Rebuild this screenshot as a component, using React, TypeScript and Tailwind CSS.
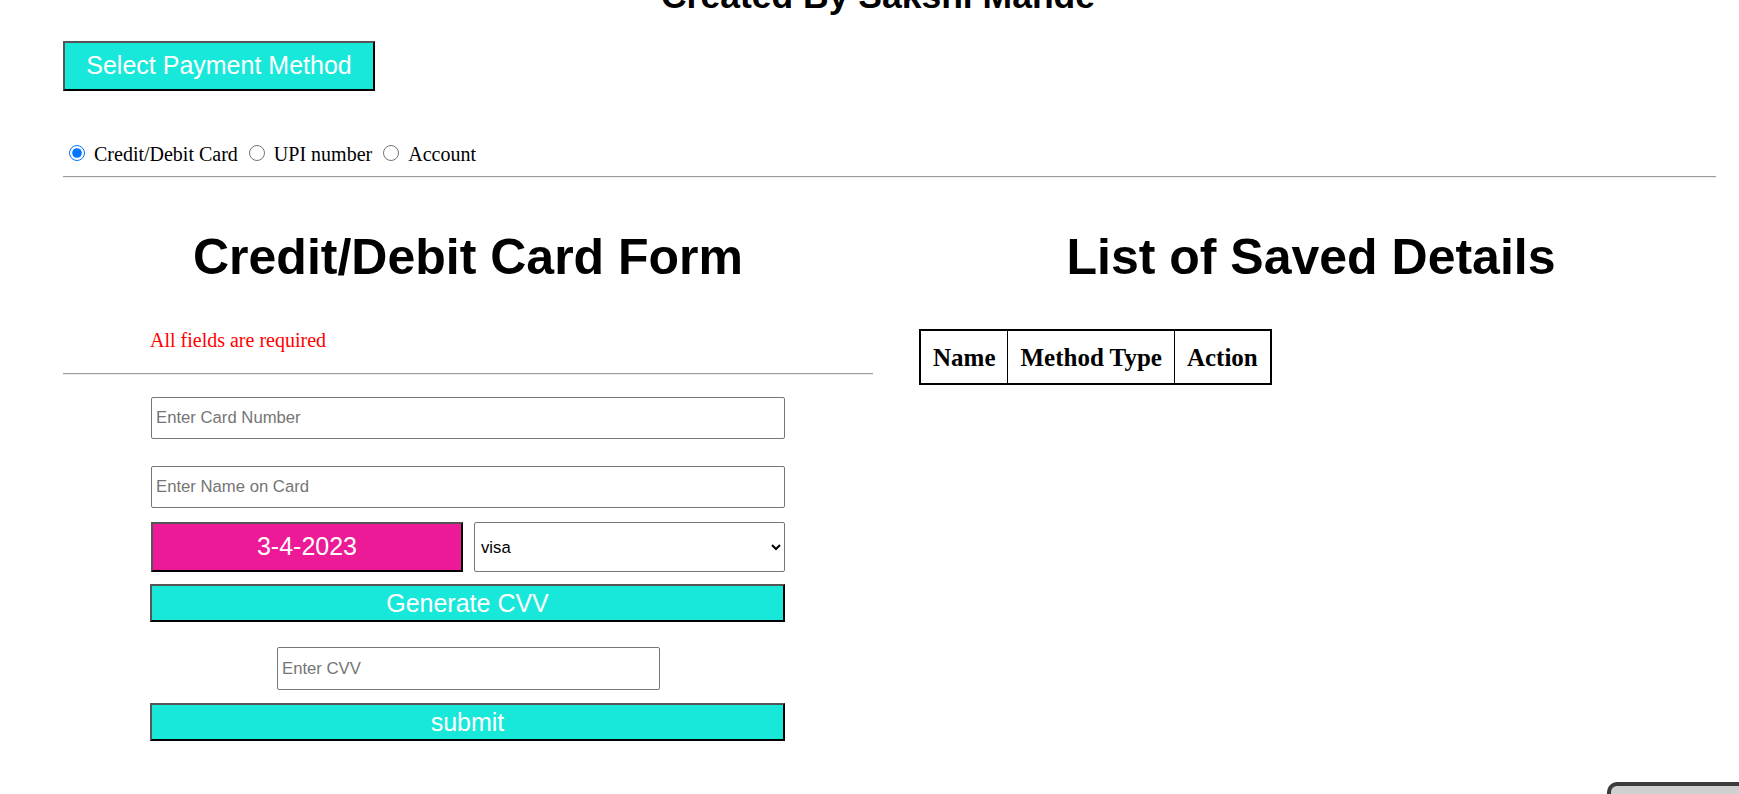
import { useState } from "react";

export default function App() {
  const [method, setMethod] = useState("card");

  return (
    <div className="relative h-[794px] overflow-hidden bg-white pl-[63px] pr-[23px] font-['Liberation_Serif',serif] text-[20px] text-black">
      {/* page title, scrolled partly out of view */}
      <h2 className="-mt-[24px] pr-[23px] text-center font-['Liberation_Sans',Arial,sans-serif] text-[35.5px] font-bold leading-[41px]">
        Created By Sakshi Mahde
      </h2>

      <button className="mt-[24px] h-[50px] w-[312px] border-2 border-black border-t-[#555] border-l-[#555] bg-[#18e8da] font-['Liberation_Sans',Arial,sans-serif] text-[25px] text-white">
        Select Payment Method
      </button>

      <div className="mt-[52px] flex h-[23px] items-center leading-[23px]">
        <input
          type="radio"
          name="method"
          checked={method === "card"}
          onChange={() => setMethod("card")}
          className="mb-[3px] ml-[6px] mr-[4px] h-4 w-4 accent-[#0075ff]"
        />
        <span className="ml-[5px]">Credit/Debit Card</span>
        <input
          type="radio"
          name="method"
          checked={method === "upi"}
          onChange={() => setMethod("upi")}
          className="mb-[3px] ml-[11px] mr-[4px] h-4 w-4"
        />
        <span className="ml-[5px]">UPI number</span>
        <input
          type="radio"
          name="method"
          checked={method === "account"}
          onChange={() => setMethod("account")}
          className="mb-[3px] ml-[11px] mr-[4px] h-4 w-4"
        />
        <span className="ml-[5px]">Account</span>
      </div>

      <div className="mt-[10px] border-t border-b border-t-[#9c9c9c] border-b-[#ededed]" />

      <div className="flex justify-between">
        {/* left: card form */}
        <div className="w-[810px]">
          <h1 className="mt-[51px] text-center font-['Liberation_Sans',Arial,sans-serif] text-[50px] font-bold leading-[57px]">
            Credit/Debit Card Form
          </h1>
          <p className="mt-[43px] pl-[87px] leading-[23px] text-[#ff0000]">All fields are required</p>
          <div className="mt-[21px] border-t border-b border-t-[#9c9c9c] border-b-[#ededed]" />

          <div className="ml-[87px] w-[635px] font-['Liberation_Sans',Arial,sans-serif]">
            <input
              placeholder="Enter Card Number"
              className="ml-px mt-[22px] block h-[42px] w-[634px] rounded-[2px] border border-[#767676] px-[4px] text-[16.7px] placeholder:text-[#757575]"
            />
            <input
              placeholder="Enter Name on Card"
              className="ml-px mt-[27px] block h-[42px] w-[634px] rounded-[2px] border border-[#767676] px-[4px] text-[16.7px] placeholder:text-[#757575]"
            />
            <div className="mt-[14px] flex gap-[11px] pl-px">
              <button className="h-[50px] w-[312px] border-2 border-black border-t-[#555] border-l-[#555] bg-[#ed1a97] text-[25px] text-white">
                3-4-2023
              </button>
              <select
                defaultValue="visa"
                className="h-[50px] w-[311px] rounded-[2px] border border-[#767676] bg-white pl-[2px] text-[16.7px] text-black"
              >
                <option value="visa">visa</option>
                <option value="mastercard">mastercard</option>
                <option value="rupay">rupay</option>
              </select>
            </div>
            <button className="mt-[12px] block h-[38px] w-[635px] border-2 border-black border-t-[#555] border-l-[#555] bg-[#18e8da] text-[25px] leading-[30px] text-white">
              Generate CVV
            </button>
            <input
              placeholder="Enter CVV"
              className="ml-[127px] mt-[25px] block h-[43px] w-[383px] rounded-[2px] border border-[#767676] px-[4px] text-[16.7px] placeholder:text-[#757575]"
            />
            <button className="mt-[13px] block h-[38px] w-[635px] border-2 border-black border-t-[#555] border-l-[#555] bg-[#18e8da] text-[25px] leading-[30px] text-white">
              submit
            </button>
          </div>
        </div>

        {/* right: saved list */}
        <div className="w-[810px]">
          <h1 className="mt-[51px] text-center font-['Liberation_Sans',Arial,sans-serif] text-[50px] font-bold leading-[57px]">
            List of Saved Details
          </h1>
          <table className="ml-[13px] mt-[43px] border-collapse border-2 border-black text-[25px]">
            <thead>
              <tr>
                <th className="h-[54px] border border-black px-[12px] leading-[29px]">Name</th>
                <th className="h-[54px] border border-black px-[12px] leading-[29px]">Method Type</th>
                <th className="h-[54px] border border-black px-[12px] leading-[29px]">Action</th>
              </tr>
            </thead>
            <tbody></tbody>
          </table>
        </div>
      </div>

      {/* floating widget peeking from bottom-right corner */}
      <div className="absolute left-[1607px] top-[782px] h-[40px] w-[200px] rounded-tl-[10px] border-4 border-[#3c3c3c] bg-[#d0d0d0]" />
    </div>
  );
}
